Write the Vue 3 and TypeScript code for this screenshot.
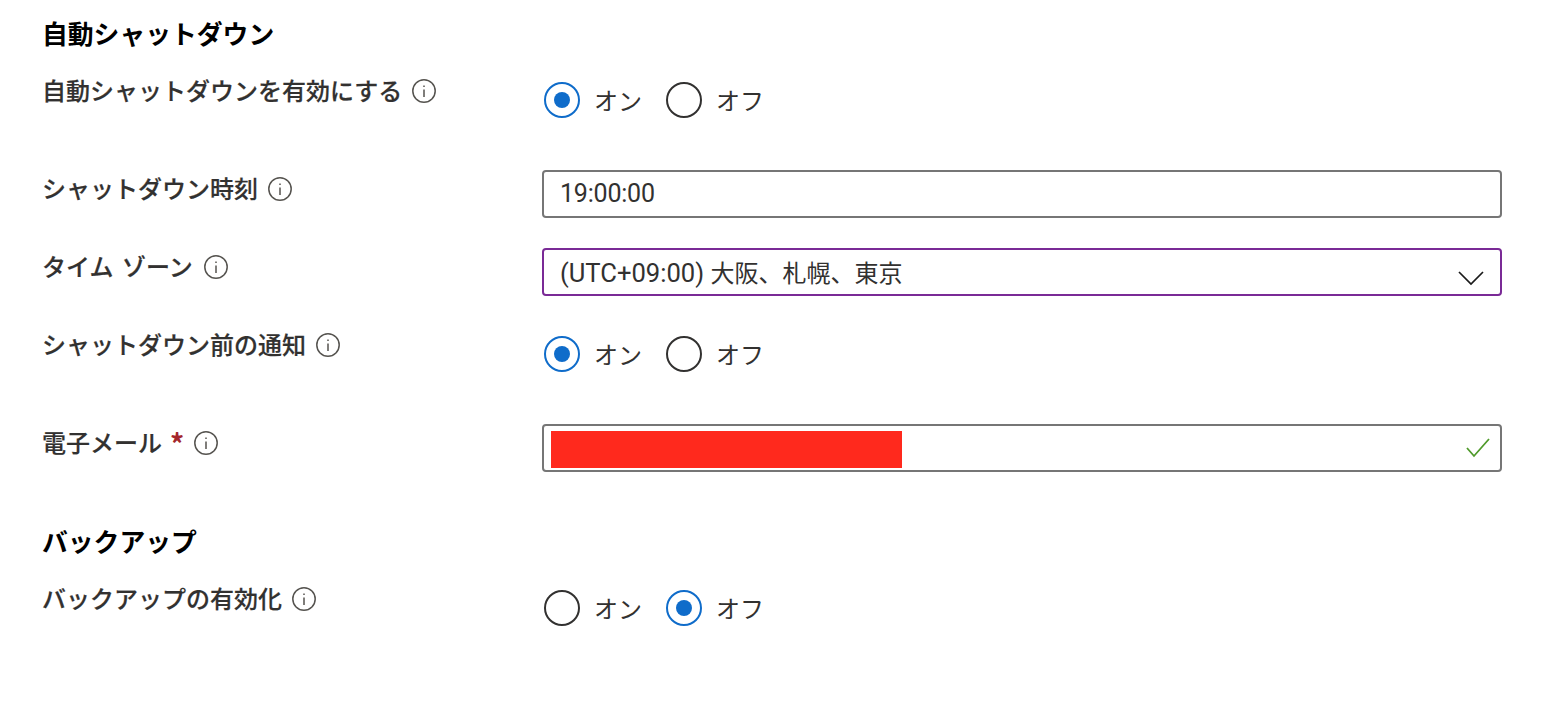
<script setup lang="ts">
interface RadioOption { label: string; checked: boolean }
const onFirst: RadioOption[] = [
  { label: 'オン', checked: true },
  { label: 'オフ', checked: false },
]
const offFirst: RadioOption[] = [
  { label: 'オン', checked: false },
  { label: 'オフ', checked: true },
]
</script>

<template>
  <main class="page">
    <h2 class="heading">自動シャットダウン</h2>
    <div class="row radio-row">
      <div class="label"><span class="text">自動シャットダウンを有効にする</span><svg class="info" viewBox="0 0 24 24"><circle cx="12" cy="12" r="11.2" /><path d="M12 10.5v7.5M12 6.5v1.6" /></svg></div>
      <div class="radios">
        <div v-for="o in onFirst" :key="o.label" class="radio"><span class="dot" :class="{ checked: o.checked }"></span><span>{{ o.label }}</span></div>
      </div>
    </div>
    <div class="row">
      <div class="label"><span class="text">シャットダウン時刻</span><svg class="info" viewBox="0 0 24 24"><circle cx="12" cy="12" r="11.2" /><path d="M12 10.5v7.5M12 6.5v1.6" /></svg></div>
      <div class="field time">19:00:00</div>
    </div>
    <div class="row">
      <div class="label"><span class="text spaced">タイム ゾーン</span><svg class="info" viewBox="0 0 24 24"><circle cx="12" cy="12" r="11.2" /><path d="M12 10.5v7.5M12 6.5v1.6" /></svg></div>
      <div class="field focused">
        <span>(UTC+09:00) <span class="cjk">大阪、札幌、東京</span></span>
        <svg class="chevron" viewBox="0 0 26 16"><path d="M1 2l12 12L25 2" /></svg>
      </div>
    </div>
    <div class="row radio-row">
      <div class="label"><span class="text">シャットダウン前の通知</span><svg class="info" viewBox="0 0 24 24"><circle cx="12" cy="12" r="11.2" /><path d="M12 10.5v7.5M12 6.5v1.6" /></svg></div>
      <div class="radios">
        <div v-for="o in onFirst" :key="o.label" class="radio"><span class="dot" :class="{ checked: o.checked }"></span><span>{{ o.label }}</span></div>
      </div>
    </div>
    <div class="row">
      <div class="label"><span class="text">電子メール</span><span class="req">*</span><svg class="info" viewBox="0 0 24 24"><circle cx="12" cy="12" r="11.2" /><path d="M12 10.5v7.5M12 6.5v1.6" /></svg></div>
      <div class="field email">
        <span class="redact"></span>
        <svg class="check" viewBox="0 0 24 20"><path d="M1 10l7 8L23 1" /></svg>
      </div>
    </div>
    <h2 class="heading second">バックアップ</h2>
    <div class="row radio-row last">
      <div class="label"><span class="text">バックアップの有効化</span><svg class="info" viewBox="0 0 24 24"><circle cx="12" cy="12" r="11.2" /><path d="M12 10.5v7.5M12 6.5v1.6" /></svg></div>
      <div class="radios">
        <div v-for="o in offFirst" :key="o.label" class="radio"><span class="dot" :class="{ checked: o.checked }"></span><span>{{ o.label }}</span></div>
      </div>
    </div>
  </main>
</template>

<style scoped>
.page {
  box-sizing: border-box;
  width: 1548px;
  height: 708px;
  padding: 14px 46px 0 42px;
  background: #fff;
  color: #323130;
  font-family: Roboto, "Noto Sans CJK JP", sans-serif;
  overflow: hidden;
}
.heading {
  margin: 0 0 20px;
  font-size: 25.8px;
  line-height: 38px;
  font-weight: 700;
  color: #000;
  font-family: "Noto Sans CJK JP", sans-serif;
}
.heading.second { margin-top: 50px; }
.row {
  display: grid;
  grid-template-columns: 500px 960px;
  margin-bottom: 30px;
}
.radio-row { height: 68px; }
.label {
  display: flex;
  align-items: center;
  height: 38px;
  font-size: 24px;
  font-weight: 500;
  font-family: "Noto Sans CJK JP", sans-serif;
}
.text {
  padding-bottom: 4px;
  -webkit-text-stroke: 0.2px #323130;
}
.spaced {
  padding-right: 1px;
  word-spacing: 3px;
}
.req {
  margin-left: 8px;
  color: #a4262c;
  font-size: 28px;
  font-weight: 700;
  line-height: 34px;
}
.info {
  width: 24px;
  height: 24px;
  margin-left: 10px;
  fill: none;
  stroke: #55534f;
  stroke-width: 1.5;
}
.radios {
  display: flex;
  gap: 24px;
  padding-top: 10px;
}
.radio {
  display: flex;
  align-items: flex-start;
  gap: 14px;
  height: 36px;
  padding-left: 2px;
  font-size: 24px;
  line-height: 36px;
  font-family: "Noto Sans CJK JP", sans-serif;
}
.radio + .radio { padding-left: 0; }
.dot {
  box-sizing: border-box;
  position: relative;
  width: 36px;
  height: 36px;
  border: 2px solid #323130;
  border-radius: 50%;
}
.dot.checked { border-color: #0f6cca; }
.dot.checked::after {
  content: "";
  position: absolute;
  top: 8px;
  left: 8px;
  width: 16px;
  height: 16px;
  border-radius: 50%;
  background: #0f6cca;
}
.field {
  box-sizing: border-box;
  display: flex;
  align-items: center;
  justify-content: space-between;
  height: 48px;
  padding: 0 18px 0 16px;
  border: 2px solid #767676;
  border-radius: 4px;
  font-size: 25.6px;
  line-height: 44px;
}
.time {
  font-size: 25px;
  letter-spacing: -0.2px;
}
.cjk {
  font-size: 24px;
  font-family: "Noto Sans CJK JP", sans-serif;
}
.focused { border-color: #7a2a96; }
.chevron {
  width: 26px;
  height: 16px;
  margin: 12px -2px 0 0;
  fill: none;
  stroke: #1a1a1a;
  stroke-width: 1.7;
}
.email { padding: 0 10px 0 7px; }
.redact {
  width: 351px;
  height: 37px;
  margin-top: 2px;
  background: #ff291d;
}
.check {
  width: 24px;
  height: 20px;
  fill: none;
  stroke: #4f9a2a;
  stroke-width: 1.8;
}
</style>

<style>
html, body { margin: 0; background: #fff; }
</style>
